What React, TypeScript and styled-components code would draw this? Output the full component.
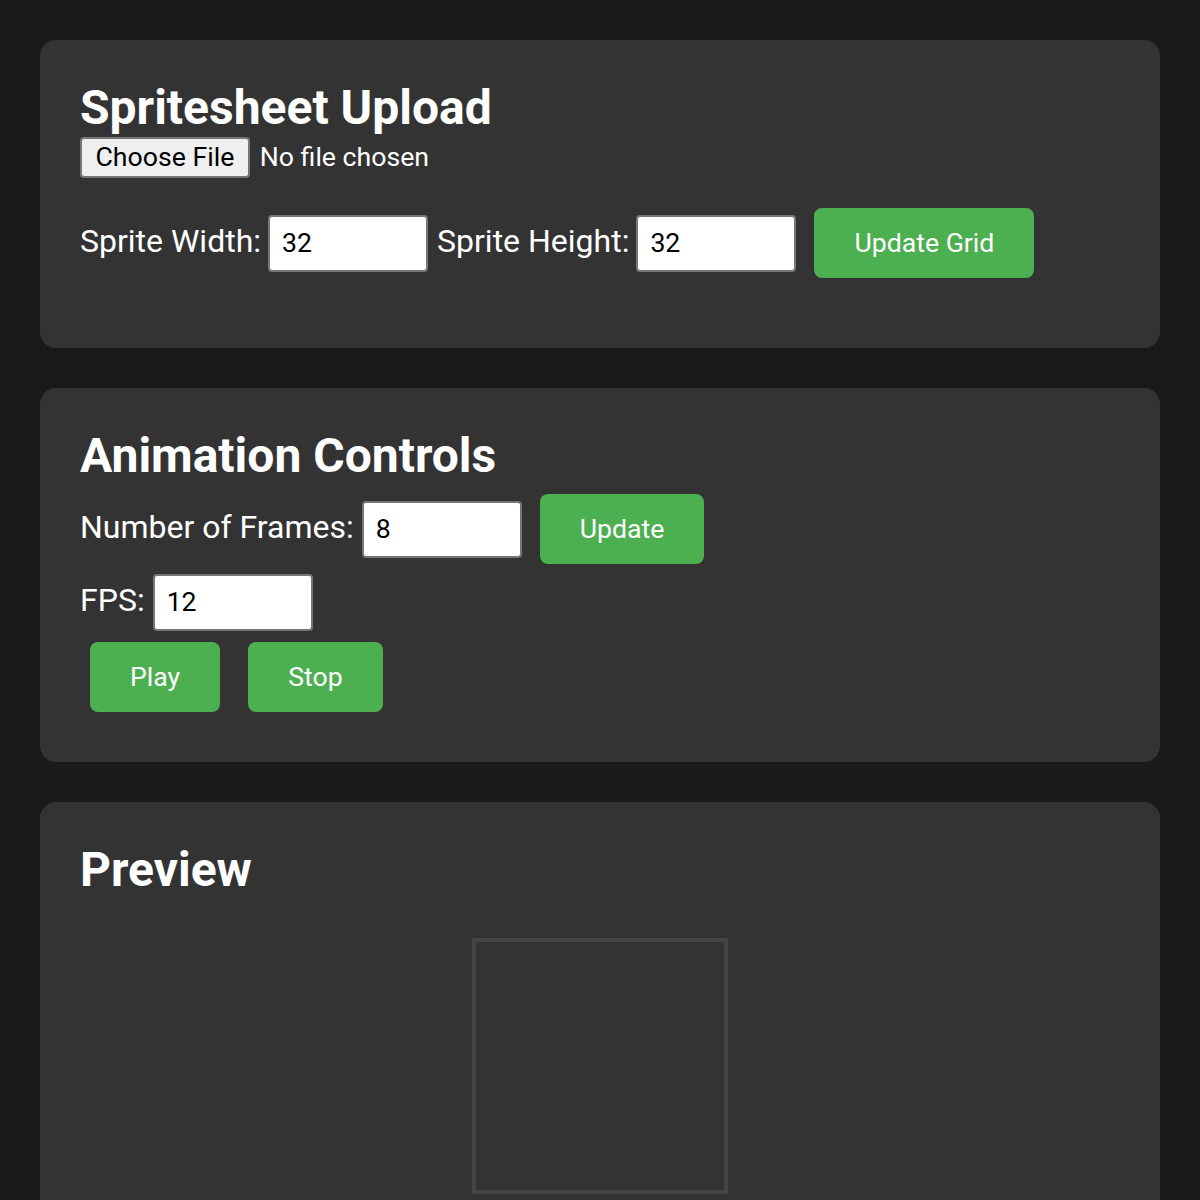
import React from 'react';
import styled, { createGlobalStyle } from 'styled-components';

const GlobalStyle = createGlobalStyle`
  html, body {
    margin: 0;
    padding: 0;
    background: #1a1a1a;
  }
  body {
    font-family: Roboto, "Liberation Sans", Arial, sans-serif;
    color: #fff;
  }
`;

const Page = styled.div`
  display: flex;
  flex-direction: column;
  gap: 40px;
  padding: 40px;
  min-height: 1200px;
  box-sizing: border-box;
`;

const Card = styled.section`
  background: #333;
  border-radius: 16px;
  padding: 40px;
  display: flex;
  flex-direction: column;
`;

const Title = styled.h2`
  margin: 0;
  font-size: 48px;
  font-weight: 700;
  line-height: 56px;
  color: #fff;
`;

const Row = styled.div<{ $my?: number; $gap?: number }>`
  display: flex;
  align-items: baseline;
  gap: ${({ $gap }) => $gap ?? 8}px;
  margin: ${({ $my }) => $my ?? 0}px 0;
`;

const Label = styled.label<{ $ml?: number }>`
  font-size: 32px;
  line-height: 38px;
  color: #fff;
  margin-left: ${({ $ml }) => $ml ?? 0}px;
`;

const NumberInput = styled.input`
  width: 160px;
  box-sizing: border-box;
  padding: 11px 12px;
  border: 2px solid #767676;
  border-radius: 4px;
  background: #fff;
  color: #000;
  font-family: Roboto, "Liberation Sans", Arial, sans-serif;
  font-size: 26.67px;
  line-height: 31px;
  outline: none;
`;

const FileButton = styled.button`
  background: #efefef;
  border: 2px solid #767676;
  border-radius: 4px;
  padding: 4px 13.5px;
  font-family: Roboto, "Liberation Sans", Arial, sans-serif;
  font-size: 26.67px;
  line-height: 29px;
  color: #000;
`;

const FileName = styled.span`
  font-size: 26.67px;
  line-height: 31px;
  color: #fff;
`;

const GreenButton = styled.button<{ $ml?: number }>`
  background: #4caf50;
  color: #fff;
  border: none;
  border-radius: 8px;
  padding: 20px 40px;
  margin-left: ${({ $ml }) => $ml ?? 0}px;
  font-family: Roboto, "Liberation Sans", Arial, sans-serif;
  font-size: 26.67px;
  line-height: 30px;
  cursor: pointer;
`;

const ButtonRow = styled.div`
  display: flex;
  gap: 28px;
  padding: 11px 10px 10px;
`;

const PreviewArea = styled.div`
  display: flex;
  justify-content: center;
  margin-top: 40px;
`;

const Canvas = styled.div`
  width: 256px;
  height: 256px;
  box-sizing: border-box;
  border: 4px solid #454545;
  background: #333;
`;

export default function App() {
  return (
    <>
      <GlobalStyle />
      <Page>
        <Card>
          <Title>Spritesheet Upload</Title>
          <Row $gap={10} style={{ marginTop: 1 }}>
            <FileButton>Choose File</FileButton>
            <FileName>No file chosen</FileName>
          </Row>
          <Row $my={30} $gap={7}>
            <Label>Sprite Width:</Label>
            <NumberInput type="number" defaultValue={32} />
            <Label $ml={2}>Sprite Height:</Label>
            <NumberInput type="number" defaultValue={32} />
            <GreenButton $ml={11}>Update Grid</GreenButton>
          </Row>
        </Card>

        <Card>
          <Title>Animation Controls</Title>
          <Row $my={10}>
            <Label>Number of Frames:</Label>
            <NumberInput type="number" defaultValue={8} />
            <GreenButton $ml={10}>Update</GreenButton>
          </Row>
          <Row>
            <Label>FPS:</Label>
            <NumberInput type="number" defaultValue={12} />
          </Row>
          <ButtonRow>
            <GreenButton>Play</GreenButton>
            <GreenButton>Stop</GreenButton>
          </ButtonRow>
        </Card>

        <Card>
          <Title>Preview</Title>
          <PreviewArea>
            <Canvas />
          </PreviewArea>
        </Card>
      </Page>
    </>
  );
}
